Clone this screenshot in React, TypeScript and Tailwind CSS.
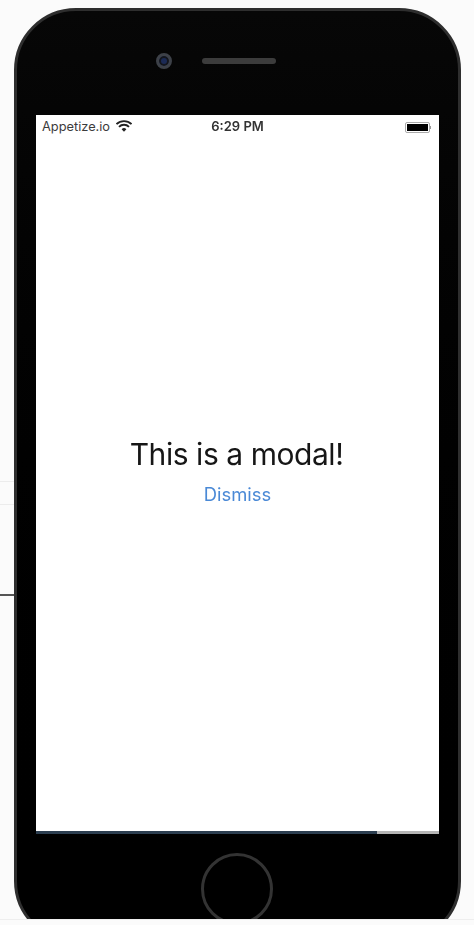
export default function App() {
  return (
    <div className="relative h-[925px] w-[474px] overflow-hidden bg-[#fbfbfb] [font-family:Inter,'Liberation_Sans',sans-serif]">
      <div className="absolute left-0 top-[481px] h-[24px] w-[14px] border-y border-[#ececec]" />
      <div className="absolute left-0 top-[594px] h-[2px] w-[14px] bg-[#555555]" />
      <div className="h-[920px] overflow-hidden border-b border-[#eeeeee] px-[14px] pt-[8px]">
        <div className="h-[935px] w-[447px] rounded-[62px] border-[3px] border-[#2e2e2e] bg-gradient-to-b from-[#070707] to-black px-[19px] blur-[0.5px]">
          <div className="flex h-[104px] items-start justify-center pr-[44px] pt-[42px]">
            <div className="mr-[30px] h-[16px] w-[16px] rounded-full border-[3px] border-[#3d4148] bg-[#1b2a55] [box-shadow:inset_0_0_0_2px_#14161c]" />
            <div className="mt-[5px] h-[6px] w-[74px] rounded-full bg-[#3c3c3c]" />
          </div>
          <div className="flex h-[719px] w-[403px] flex-col bg-white">
            <div className="grid h-[23px] grid-cols-[1fr_auto_1fr] items-center px-[6px] pt-[1px] text-[12.8px] text-[#3c3c3c]">
              <div className="flex items-center gap-[6px]">
                <span>Appetize.io</span>
                <svg width="16" height="12" viewBox="0 0 16 12" className="-mt-[2px]">
                  <path d="M0.5 4.2a10.6 10.6 0 0 1 15 0" fill="none" stroke="#222222" strokeWidth="1.9" />
                  <path d="M3 6.9a7 7 0 0 1 10 0" fill="none" stroke="#222222" strokeWidth="1.9" />
                  <path d="M5.6 9.3a3.4 3.4 0 0 1 4.8 0L8 11.8z" fill="#222222" />
                </svg>
              </div>
              <span className="text-[13px] font-semibold text-[#333333]">6:29 PM</span>
              <div className="flex items-center justify-end pr-[2px]">
                <div className="flex h-[11px] w-[25px] items-center rounded-[2px] border border-[#aaaaaa] p-[1px]">
                  <div className="h-full w-full bg-black" />
                </div>
                <div className="h-[3px] w-[1px] bg-[#999999]" />
              </div>
            </div>
            <div className="flex flex-1 flex-col items-center pt-[298px]">
              <p className="pr-[2px] text-[30px] leading-[36px] tracking-[-0.45px] text-[#161616]">This is a modal!</p>
              <button className="mt-[10px] text-[18.4px] leading-[24px] text-[#4a89d6]">Dismiss</button>
            </div>
            <div className="flex h-[3px]">
              <div className="h-full w-[341px] bg-[#2c3e50]" />
              <div className="h-full flex-1 bg-[#b5b5b5]" />
            </div>
          </div>
          <div className="flex justify-center pr-[1px] pt-[19px]">
            <div className="h-[72px] w-[72px] rounded-full border-[3px] border-[#333333]" />
          </div>
        </div>
      </div>
    </div>
  );
}
